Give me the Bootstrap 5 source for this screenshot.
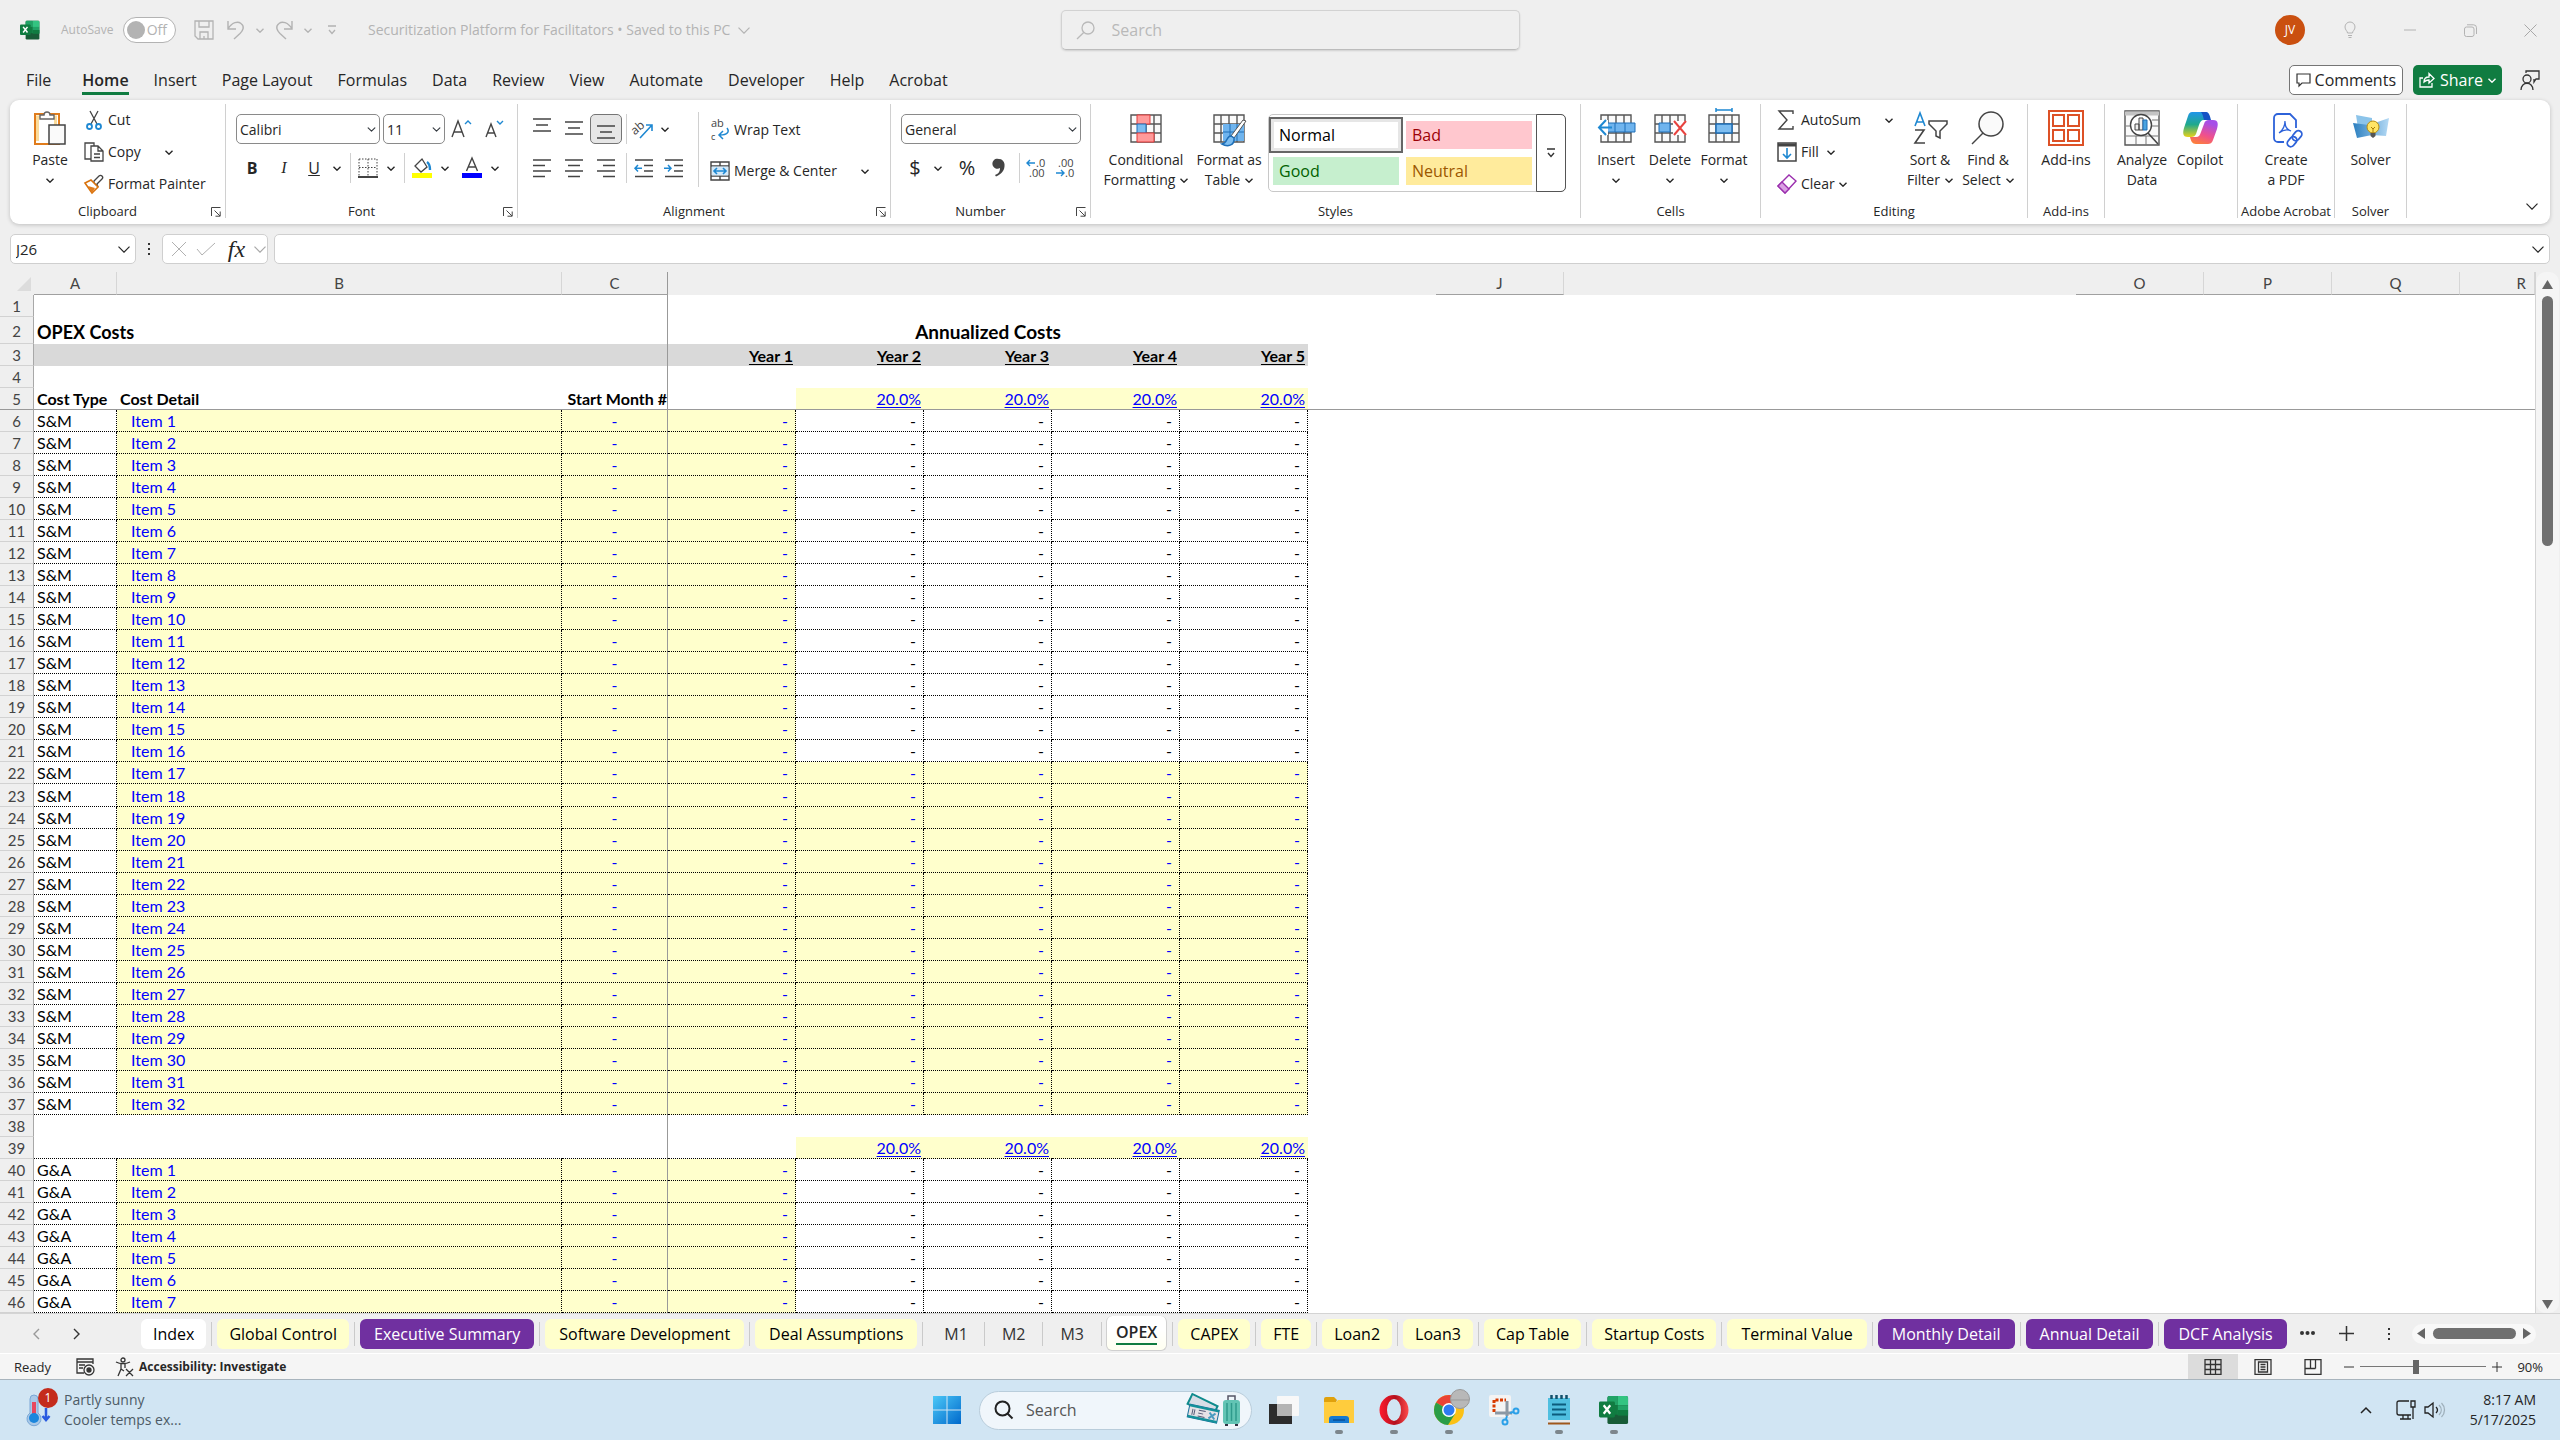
<!DOCTYPE html>
<html lang="en">
<head>
<meta charset="utf-8">
<meta name="viewport" content="width=device-width, initial-scale=1">
<title>Securitization Platform for Facilitators - Excel</title>
<link href="https://cdn.jsdelivr.net/npm/bootstrap@5.3.0/dist/css/bootstrap.min.css" rel="stylesheet">
<style>
:root{--ui:"Open Sans","Noto Sans",sans-serif;--cell:Lato,"Open Sans",sans-serif;--ink:#262626;--chrome:#efefef;--line:#d0d0d0}
body{font-family:var(--ui);font-size:14px;line-height:20px;color:var(--ink);background:var(--chrome);overflow:hidden}
button{background:none;border:0;padding:0;color:inherit;font:inherit}
a{color:inherit;text-decoration:none}
svg{display:block;flex:none;overflow:visible}
.s16{width:16px;height:16px}.s20{width:20px;height:20px}.s24{width:24px;height:24px}.s32{width:32px;height:32px}
.chev{width:8px;height:5px;fill:none;stroke:currentColor;stroke-width:1.4}
.chev-lg{width:12px;height:7px;fill:none;stroke:currentColor;stroke-width:1.2}
/* title bar */
.titlebar{height:60px;padding-left:20px;color:#b3b3b3}
.autosave{font-size:12px;margin-left:21px;width:62px}
.toggle{width:53px;height:26px;border:1px solid #b3b3b3;border-radius:13px;background:#fff;padding:0 8px 0 3px;font-size:14px}
.toggle i{width:18px;height:18px;border-radius:50%;background:#b3b3b3}
.quick button{width:32px;height:32px}
.quick .narrow{width:16px}
.searchbox{width:459px;height:40px;border:1px solid #d2d2d2;border-bottom-color:#bcbcbc;border-radius:5px;box-shadow:0 1px 2px #0002;padding:0 14px}
.searchbox input,.tasksearch input,.formula input,.namebox input{border:0;background:none;outline:0;min-width:0;font-size:16px;flex:1;padding:0;color:inherit}
.searchbox input::placeholder{color:#b9b9b9;opacity:1}
.side{flex:1 1 0;min-width:0}
.winbtn{width:60px;height:40px}
.avatar{width:30px;height:30px;border-radius:50%;background:#ca5010;color:#fff;font-size:12px}
/* ribbon tabs */
.tabs{height:40px;padding:0 20px 0 26px;font-size:16px}
.tabs nav{gap:25px}
.tabs nav a{height:35px;line-height:41px}
.tabs nav a:first-child{margin-right:6px}
.tabs nav .on{font-weight:600;border-bottom:3px solid #107c41}
.tabs .pill{height:30px;border-radius:5px;padding:0 6px;gap:4px;margin-right:10px}
.tabs .comments{border:1px solid #757575;background:#fff}
.tabs .share{background:#107c41;color:#fff;gap:5px}
/* ribbon */
.ribbon{margin:0 10px;height:124px;background:#fff;border-radius:9px;box-shadow:0 1px 4px #0003;padding:4px 0 6px}
.grp{border-right:1px solid var(--line);display:flex;flex-direction:column;justify-content:space-between;position:relative}
.grp .body{display:flex;height:100px}
.grp .title{font-size:13px;line-height:14px;text-align:center;white-space:nowrap}
.grp .with-launch{padding-right:20px}
.launch{position:absolute;right:4px;bottom:1px;width:10px;height:10px}
.g-clip{width:216px}.g-font{width:292px}.g-align{width:373px}.g-num{width:200px}.g-sty{width:490px}.g-cell{width:180px}
.g-edit{width:267px}.g-add{width:77px}.g-ana{width:133px}.g-acro{width:97px}.g-solv{width:72px}
.g-clip .body{padding-left:6px}.g-sty .body{padding-left:5px}
.row32{height:32px;display:flex;align-items:center;white-space:nowrap}
.row32 .s20,.row32 .s24{margin-right:4px}
.two{padding:10px 0 0 10px;display:flex;flex-direction:column;gap:9px}
.line30{height:30px;display:flex;align-items:center}
.line30 button,.slot{display:flex;align-items:center;justify-content:center;height:30px}
.w16{width:16px}.w18{width:18px}.w26{width:26px}.w28{width:28px}.w32{width:32px}
.sep{width:8px;height:30px;flex:none;display:flex;justify-content:center}
.sep::before{content:"";width:1px;background:var(--line)}
.combo{height:30px;border:1px solid #8a8a8a;border-radius:5px;font-size:14px;padding:0 18px 0 3px;background-size:9px 9px;background-position:right 3px center;color:#262626}
.press{background:#e6e6e6;border:1px solid #757575!important;border-radius:5px}
.big{display:flex;flex-direction:column;align-items:center;padding-top:8px;white-space:nowrap;line-height:20px}
.big .s32{margin-bottom:6px}
.big span{display:flex;align-items:center;gap:5px;height:20px}
.w100p{width:100px}.w68{width:68px}.w66{width:66px}.w58{width:58px}.w54{width:54px}
.gallery{width:298px;height:78px;margin:10px 0 0 6px;border:1px solid #c8c8c8;border-radius:5px;font-size:16px;display:flex}
.swatches{display:grid;grid-template-columns:134px 126px;grid-template-rows:36px 28px;column-gap:3px;row-gap:4px;padding:2px 4px 2px 0;align-items:center}
.swatches button{text-align:left;padding-left:6px;height:28px}
.swatches .normal{height:36px;border:2px solid #666;box-shadow:inset 0 0 0 3px #e6e6e6;color:#000;padding-left:8px}
.bad{background:#ffc7ce;color:#9c0006}.good{background:#c6efce;color:#006100;margin-left:4px;width:126px}.neutral{background:#ffeb9c;color:#9c5700}
.more{width:30px;margin:-1px -1px -1px auto;border:1px solid #555!important;border-radius:0 5px 5px 0;display:flex;align-items:center;justify-content:center}
/* formula bar */
.fbar{padding:10px 10px 8px;gap:6px}
.fbar>div{height:30px;background:#fff;border:1px solid #cfcfcf;border-radius:5px;display:flex;align-items:center}
.namebox{width:126px;padding:0 5px}
.namebox input{width:80px;font-size:15px;flex:1}
.fx{width:106px;justify-content:space-between;padding:0 1px 0 8px;color:#a8a8a8}
.fx em{font-family:"Liberation Serif",serif;font-size:24px;color:#262626;margin-left:3px}
.formula{flex:1;padding:0 5px 0 8px}
/* worksheet */
.sheet{min-height:0}
.sheetview{overflow:hidden;min-width:0;background:#fff;border-right:1px solid #d4d4d4}
.cells{font-family:var(--cell);font-size:16px;line-height:20px;table-layout:fixed;width:100%;border-collapse:separate;border-spacing:0;color:#000;background:#fff}
.cells th,.cells td{height:22px;padding:0 3px;white-space:nowrap;overflow:hidden;vertical-align:bottom}
.cells thead th{height:23px;background:var(--chrome);font-weight:400;color:#444;text-align:center;vertical-align:middle;line-height:18px;font-size:15px}
.cells thead .edge{border-bottom:1px solid #a0a0a0;border-right:1px solid #d6d6d6}
.cells tbody th{background:var(--chrome);border-right:1px solid #a8a8a8;border-bottom:1px solid #d2d2d2;font-weight:400;font-size:15px;color:#444;text-align:center;padding:0}
.cells .tall>*{height:27px;line-height:24px}
.cells .r23>*{height:23px}
.cells .pane{border-right:1px solid #999!important}
.cells .freeze>*{border-bottom:1px solid #999!important}
.cells .item td:nth-child(-n+9){border-bottom:1px dotted #000;border-right:1px dotted #000}
.cells .topline td:nth-child(-n+9){border-bottom:1px dotted #000}
.cells .y{background:#ffc}
.cells .blue{color:#00f}
.cells .detail{padding-left:14px}
.cells .dash{padding-right:7px}
.cells .grey{background:#d9d9d9}
.cells u{text-underline-offset:2px}
.cells .big-h{font-size:18px;font-weight:700}
.cells .mid-h{font-size:19px;font-weight:700;text-align:center}
.cells b{font-weight:700}
.vbar{width:23px;flex:none;background:#f5f5f5;border-radius:10px;margin-right:1px}
.vbar .thumb{width:11px;height:250px;border-radius:6px;background:#707070;margin-top:7px}
.tri{width:11px;height:9px;fill:#666}
/* sheet tabs */
.sheettabs{height:40px;border-top:1px solid #d4d4d4;font-size:16px;padding-left:25px}
.sheettabs .nav-b{width:40px}
.stab{height:30px;line-height:30px;border-radius:6px;padding:0 12px;white-space:nowrap;color:#000}
.stab.plain{padding:0 17px;color:#333}
.stabs{display:flex;align-items:center;padding-left:36px}
.stabs i{width:1px;height:24px;background:#cacaca;margin:0 5px}
.stabs i.tight{margin:0}
.stab.ye{background:#ffc}.stab.pu{background:#7030a0;color:#fff}.stab.wh{background:#fff}
.stab.pu,.stab.roomy{padding:0 14px}
.stab.cur{background:linear-gradient(#fff 40%,#fffff0);height:35px;line-height:32px;align-self:flex-start;font-weight:600;padding:0 9px;border:1px solid #d0d0d0;border-top:0;color:#262626;margin-left:4px}
.stab.cur u{text-decoration:none;border-bottom:2px solid #107c41;display:block;height:29px}
.dots-v{margin:0 20px 0 8px}
.hbar{width:124px;height:20px;background:#f8f8f8;border-radius:10px;margin-right:24px;padding:0 5px}
.hbar .thumb{width:83px;height:11px;border-radius:6px;background:#707070}
/* status bar */
.status{height:27px;background:#f5f5f5;border-top:1px solid #fff;border-bottom:1px solid #a8b4bd;font-size:13px;padding-left:14px}
.status button{height:25px}
.status .access{font-size:12px}
.view{width:50px}
.view.on{background:#dcdcdc}
.pct{margin:0 17px 0 13px}
.zoomr{-webkit-appearance:none;appearance:none;width:126px;height:14px;background:linear-gradient(#777,#777) center/100% 1px no-repeat;margin:0 4px}
.zoomr::-webkit-slider-thumb{-webkit-appearance:none;width:6px;height:14px;background:#666}
/* taskbar */
.taskbar{height:60px;background:#d1e5f3}
.weather{color:#4d5b66;padding-left:24px}
.badge1{position:absolute;left:14px;top:-6px;width:20px;height:20px;border-radius:50%;background:#c42b1c;color:#fff;font-size:12px;line-height:20px;text-align:center}
.tk{width:55px;height:60px;position:relative}
.tk .s32{width:30px;height:30px}
.tk.run::after{content:"";position:absolute;bottom:6px;width:8px;height:4px;border-radius:2px;background:#7d868c}
.tasksearch{width:273px;height:39px;border:1px solid #b9cddb;border-radius:20px;background:#f0f6fb;padding:0 10px 0 14px;margin:0 4px 0 5px}
.tasksearch input::placeholder{color:#555;opacity:1}
.clock{width:92px;text-align:right;padding-right:24px}
</style>
</head>
<body class="vh-100 d-flex flex-column">
<svg width="0" height="0" class="position-absolute" aria-hidden="true">
<defs>
<symbol id="cv" viewBox="0 0 8 5"><path d="M.5.7 4 4.2 7.5.7"/></symbol>
<symbol id="cvl" viewBox="0 0 12 7"><path d="M.5.7 6 6.2 11.500.7"/></symbol>
<symbol id="xl" viewBox="0 0 32 32"><rect x="9" y="1" width="22" height="30" rx="2" fill="#185c37"/><path d="M9 3a2 2 0 0 1 2-2h9v10H9z" fill="#21a366"/><path d="M20 1h9a2 2 0 0 1 2 2v8H20z" fill="#33c481"/><path d="M9 11h11v10H9z" fill="#107c41"/><path d="M20 11h11v10H20z" fill="#21a366" /><path d="M20 16h11v6H20z" fill="#107c41"/><rect x="0" y="7" width="17" height="17" rx="1.500" fill="#107c41"/><path d="M5 11l7 9M12 11l-7 9" stroke="#fff" stroke-width="2.400" fill="none"/></symbol>
<symbol id="launch" viewBox="0 0 10 10"><path d="M.5 9V.5H9.500M3.500 3.500l5.500 5.500M9.200 4.500v4.700H4.500" fill="none" stroke="#444"/></symbol>
<symbol id="gridr" viewBox="0 0 32 32"><path d="M1 1h30v27H1zM1 10h30M1 19h30M8 1v27M16 1v27M24 1v27" fill="#fafafa" stroke="#555" stroke-width="1.400"/></symbol>
<symbol id="al-t" viewBox="0 0 20 20"><path d="M1 3h18M4 9h12M1 15h18" stroke="#444" stroke-width="1.500"/></symbol>
<symbol id="al-l" viewBox="0 0 20 20"><path d="M1 2h18M1 7.500h12M1 13h18M1 18.500h12" stroke="#444" stroke-width="1.500"/></symbol>
<symbol id="al-c" viewBox="0 0 20 20"><path d="M1 2h18M4 7.500h12M1 13h18M4 18.500h12" stroke="#444" stroke-width="1.500"/></symbol>
<symbol id="al-r" viewBox="0 0 20 20"><path d="M1 2h18M7 7.500h12M1 13h18M7 18.500h12" stroke="#444" stroke-width="1.500"/></symbol>
</defs>
</svg>

<header class="titlebar d-flex align-items-center flex-shrink-0">
  <div class="side d-flex align-items-center">
    <svg class="s20"><use href="#xl"/></svg>
    <label class="autosave" for="autosave">AutoSave</label>
    <button id="autosave" class="toggle d-flex align-items-center justify-content-between"><i></i>Off</button>
    <div class="quick d-flex align-items-center ms-2 ps-1">
      <button class="d-flex align-items-center justify-content-center" aria-label="Save"><svg class="s20" viewBox="0 0 20 20" fill="none" stroke="#b3b3b3" stroke-width="1.300"><path d="M1 1h18v18H4l-3-3zM5 1v6h10V1M6 19v-7h8v7M10 19v-3"/></svg></button>
      <button class="d-flex align-items-center justify-content-center" aria-label="Undo"><svg class="s20" viewBox="0 0 20 20" fill="none" stroke="#b3b3b3" stroke-width="1.400"><path d="M2 1v8h8M2 9C6 2 12 1 15 3.500c4 3 2 7-1 10L8 19"/></svg></button>
      <button class="narrow" aria-label="Undo list"><svg class="chev ms-1"><use href="#cv"/></svg></button>
      <button class="d-flex align-items-center justify-content-center" aria-label="Redo"><svg class="s20" viewBox="0 0 20 20" fill="none" stroke="#b3b3b3" stroke-width="1.400"><path d="M18 1v8h-8M18 9C14 2 8 1 5 3.500c-4 3-2 7 1 10L12 19"/></svg></button>
      <button class="narrow" aria-label="Redo list"><svg class="chev ms-1"><use href="#cv"/></svg></button>
      <button class="d-flex align-items-center justify-content-center" aria-label="Customize toolbar"><svg width="8" height="10" viewBox="0 0 8 10" fill="none" stroke="#b3b3b3" stroke-width="1.300"><path d="M0 1h8M1 5l3 3.500L7 5"/></svg></button>
    </div>
    <button class="d-flex align-items-center gap-2 ms-3 ps-1">Securitization Platform for Facilitators • Saved to this PC <svg class="chev-lg"><use href="#cvl"/></svg></button>
  </div>
  <div class="searchbox d-flex align-items-center gap-3">
    <svg class="s20" viewBox="0 0 20 20" fill="none" stroke="#b9b9b9" stroke-width="1.300"><circle cx="12" cy="8" r="6"/><path d="M7.700 12.500 1 19"/></svg>
    <input type="search" placeholder="Search" aria-label="Search">
  </div>
  <div class="side d-flex align-items-center justify-content-end">
    <button class="winbtn d-flex align-items-center justify-content-center" aria-label="Account"><span class="avatar d-flex align-items-center justify-content-center">JV</span></button>
    <button class="winbtn d-flex align-items-center justify-content-center" aria-label="Tips"><svg class="s16" viewBox="0 0 16 16" fill="none" stroke="#b3b3b3"><path d="M5.500 11C5.500 9 3 8 3 5a5 5 0 0 1 10 0c0 3-2.500 4-2.500 6zM6 13.500h4M6.500 15.500h3"/></svg></button>
    <button class="winbtn d-flex align-items-center justify-content-center" aria-label="Minimize"><svg width="12" height="2"><path d="M0 1h12" stroke="#b3b3b3"/></svg></button>
    <button class="winbtn d-flex align-items-center justify-content-center" aria-label="Restore"><svg width="13" height="13" viewBox="0 0 13 13" fill="none" stroke="#b3b3b3"><rect x=".5" y="3" width="9.500" height="9.500" rx="2"/><path d="M3 .8h6.500a3 3 0 0 1 3 3V10"/></svg></button>
    <button class="winbtn d-flex align-items-center justify-content-center" aria-label="Close"><svg width="13" height="13" viewBox="0 0 13 13" stroke="#a8a8a8"><path d="M.5.5l12 12M12.500.5l-12 12"/></svg></button>
  </div>
</header>

<div class="tabs d-flex align-items-center flex-shrink-0">
  <nav class="d-flex flex-grow-1 align-self-start">
    <a href="#">File</a><a href="#" class="on">Home</a><a href="#">Insert</a><a href="#">Page Layout</a><a href="#">Formulas</a><a href="#">Data</a><a href="#">Review</a><a href="#">View</a><a href="#">Automate</a><a href="#">Developer</a><a href="#">Help</a><a href="#">Acrobat</a>
  </nav>
  <button class="pill comments d-flex align-items-center"><svg width="15" height="14" viewBox="0 0 15 14" fill="none" stroke="#333" stroke-width="1.200"><path d="M1 1h13v9H6l-3 3v-3H1z"/></svg>Comments</button>
  <button class="pill share d-flex align-items-center"><svg class="s16" viewBox="0 0 16 16" fill="none" stroke="#fff" stroke-width="1.300"><path d="M4 6H1v9h12v-4M5 10c0-4 3-5 5-5V1.500l5 5-5 4.500V8c-3 0-4 1-5 2z"/></svg>Share <svg class="chev"><use href="#cv"/></svg></button>
  <button class="ms-2" aria-label="People"><svg class="s20" viewBox="0 0 20 20" fill="none" stroke="#333" stroke-width="1.300"><circle cx="7" cy="9" r="4"/><path d="M1 20c0-9 12-9 12 0M6 3V1h13v8h-3l-2 3V9"/></svg></button>
</div>

<section class="ribbon d-flex flex-shrink-0" aria-label="Ribbon">
  <div class="grp g-clip">
    <div class="body">
      <button class="big w68"><svg class="s32" viewBox="0 0 32 32"><rect x="1" y="2" width="24" height="30" fill="#fff" stroke="#e07c1c" stroke-width="2"/><path d="M3.500 29V5h18v8" fill="none" stroke="#fbdc9c" stroke-width="3"/><path d="M6 7V3h4c0-4 6-4 6 0h4v4z" fill="#fff" stroke="#666" stroke-width="1.400"/><rect x="15" y="13" width="16" height="19" fill="#fafafa" stroke="#444" stroke-width="1.500"/></svg><span>Paste</span><span><svg class="chev"><use href="#cv"/></svg></span></button>
      <div>
        <button class="row32"><svg class="s20" viewBox="0 0 20 20" fill="none" stroke-width="1.300"><path d="M6 1l7 13M14 1 7 14" stroke="#444"/><circle cx="5.500" cy="16.500" r="2.500" stroke="#1e88d2" stroke-width="1.800"/><circle cx="14.500" cy="16.500" r="2.500" stroke="#1e88d2" stroke-width="1.800"/></svg>Cut</button>
        <button class="row32"><svg class="s20" viewBox="0 0 20 20" fill="#fff" stroke="#444" stroke-width="1.300"><path d="M10 4V1H1v16h6"/><path d="M7 4h7l5 5v10H7zM14 4v5h5M10 12h6M10 15.500h6"/></svg>Copy <svg class="chev ms-4"><use href="#cv"/></svg></button>
        <button class="row32"><svg class="s20" viewBox="0 0 20 20"><path d="M10 7l5-5c2-2 5 1 3 3l-5 5 1 3-4-4z" fill="#fff" stroke="#444" stroke-width="1.300"/><path d="M1 9l6-3 7 7-6 6z" fill="#fff" stroke="#d9730d" stroke-width="1.600"/><path d="M4 12l7 2-3 5z" fill="#e07c1c"/></svg>Format Painter</button>
      </div>
    </div>
    <div class="title with-launch">Clipboard</div><svg class="launch"><use href="#launch"/></svg>
  </div>

  <div class="grp g-font">
    <div class="two">
      <div class="line30">
        <select class="form-select combo" style="width:144px" aria-label="Font"><option>Calibri</option></select>
        <select class="form-select combo" style="width:62px;margin-left:3px" aria-label="Font size"><option>11</option></select>
        <button class="w32" aria-label="Grow font"><svg class="s20" viewBox="0 0 20 20" fill="none"><path d="M1 18 7 2l6 16M3 13h8" stroke="#444" stroke-width="1.400"/><path d="M14 5l3-3 3 3" stroke="#1e88d2" stroke-width="1.400"/></svg></button>
        <button class="w32" aria-label="Shrink font"><svg class="s20" viewBox="0 0 20 20" fill="none"><path d="M3 18 8 5l5 13M5 14h6" stroke="#444" stroke-width="1.400"/><path d="M14 2l3 3 3-3" stroke="#1e88d2" stroke-width="1.400"/></svg></button>
      </div>
      <div class="line30">
        <button class="w32 fw-bold fs-6">B</button><button class="w32 fst-italic fs-6" style="font-family:'Liberation Serif',serif">I</button><button class="w28 text-decoration-underline fs-6">U</button>
        <button class="w18" aria-label="Underline list"><svg class="chev"><use href="#cv"/></svg></button><span class="sep"></span>
        <button class="w28" aria-label="Borders"><svg class="s20" viewBox="0 0 20 20" fill="none" stroke="#444"><path d="M1 1h18v17M1 1v17M10 1v17M1 9.500h18" stroke-dasharray="1.500 1.500"/><path d="M0 19h20" stroke-width="2"/></svg></button><button class="w18" aria-label="Borders list"><svg class="chev"><use href="#cv"/></svg></button><span class="sep"></span>
        <button class="w28" aria-label="Fill colour"><svg class="s20" viewBox="0 0 20 20"><path d="M3 8l7-7 5 8-6 5z" fill="#fff" stroke="#444" stroke-width="1.300"/><path d="M15 4c3 2 3 5 3 8" stroke="#1e88d2" stroke-width="2.400" fill="none"/><path d="M0 15h20v5H0z" fill="#ff0"/></svg></button><button class="w18" aria-label="Fill list"><svg class="chev"><use href="#cv"/></svg></button>
        <button class="w28 ms-1" aria-label="Font colour"><svg class="s20" viewBox="0 0 20 20"><path d="M4.500 13 10 0l5.500 13M6.500 9h7" fill="none" stroke="#444" stroke-width="1.400"/><path d="M0 15h20v5H0z" fill="#00f"/></svg></button><button class="w18" aria-label="Font colour list"><svg class="chev"><use href="#cv"/></svg></button>
      </div>
    </div>
    <div class="title with-launch">Font</div><svg class="launch"><use href="#launch"/></svg>
  </div>

  <div class="grp g-align">
    <div class="body">
      <div class="two ps-2">
        <div class="line30">
          <button class="w32" aria-label="Top"><svg class="s20"><use href="#al-t" y="-3"/></svg></button><button class="w32" aria-label="Middle"><svg class="s20"><use href="#al-t"/></svg></button><button class="w32 press" aria-label="Bottom"><svg class="s20"><use href="#al-t" y="4"/></svg></button><span class="sep"></span>
          <button class="w26" aria-label="Orientation"><svg class="s20" viewBox="0 0 20 20"><text x="-1" y="13" font-size="12" fill="#444" transform="rotate(-40 5 11)">ab</text><path d="M7 19 19 6M13 6h6v6" fill="none" stroke="#1e88d2" stroke-width="1.600"/></svg></button><button class="w18" aria-label="Orientation list"><svg class="chev"><use href="#cv"/></svg></button>
        </div>
        <div class="line30">
          <button class="w32" aria-label="Left"><svg class="s20"><use href="#al-l"/></svg></button><button class="w32" aria-label="Center"><svg class="s20"><use href="#al-c"/></svg></button><button class="w32" aria-label="Right"><svg class="s20"><use href="#al-r"/></svg></button><span class="sep"></span>
          <button class="w28" aria-label="Decrease indent"><svg class="s20" viewBox="0 0 20 20" fill="none"><path d="M1 2h18M10 7.500h9M10 13h9M1 18.500h18" stroke="#444" stroke-width="1.500"/><path d="M8 10.200H1M4 7l-3 3.200 3 3.200" stroke="#1e88d2" stroke-width="1.500"/></svg></button>
          <button class="w32" aria-label="Increase indent"><svg class="s20" viewBox="0 0 20 20" fill="none"><path d="M1 2h18M10 7.500h9M10 13h9M1 18.500h18" stroke="#444" stroke-width="1.500"/><path d="M0 10.200h7M4 7l3 3.200-3 3.200" stroke="#1e88d2" stroke-width="1.500"/></svg></button>
        </div>
      </div>
      <span class="sep h-75 mt-2 ms-1"></span>
      <div class="two ps-2">
        <button class="row32"><svg class="s20" viewBox="0 0 20 20"><text x="1" y="7" font-size="11" fill="#444">ab</text><text x="1" y="20" font-size="9" fill="#444">c</text><path d="M17 8c3 4 0 7-7 7M13 11l-4 4 4 4" fill="none" stroke="#1e88d2" stroke-width="1.500"/></svg>Wrap Text</button>
        <button class="row32"><svg class="s20" viewBox="0 0 20 20"><path d="M1 1h18v18H1zM1 5h18M1 15h18M10 1v4M10 15v4" fill="#fff" stroke="#444" stroke-width="1.400"/><path d="M1.700 5.500h16.600v9H1.700z" fill="#d3e9f9"/><path d="M4 10h12M7 7l-3 3 3 3M13 7l3 3-3 3" fill="none" stroke="#1e88d2" stroke-width="1.600"/></svg>Merge &amp; Center <svg class="chev ms-4"><use href="#cv"/></svg></button>
      </div>
    </div>
    <div class="title with-launch">Alignment</div><svg class="launch"><use href="#launch"/></svg>
  </div>

  <div class="grp g-num">
    <div class="two">
      <div class="line30"><select class="form-select combo" style="width:180px" aria-label="Number format"><option>General</option></select></div>
      <div class="line30">
        <button class="w28 fs-5">$</button><button class="w18" aria-label="Currency list"><svg class="chev"><use href="#cv"/></svg></button>
        <button class="w32 fs-5 ms-1">%</button><button class="w32" aria-label="Comma style"><svg width="12" height="18" viewBox="0 0 12 18"><path d="M6 0a5 5 0 1 0 1 9c0 4-2 6-5 7l1 1.500C9 15 12 11 11.500 5 11 2 9 0 6 0z" fill="#444"/></svg></button><span class="sep"></span>
        <button class="w26" aria-label="Increase decimal"><svg class="s20" viewBox="0 0 20 20"><path d="M9 5H1M4 2 1 5l3 3" fill="none" stroke="#1e88d2" stroke-width="1.400"/><text x="10" y="9" font-size="11" fill="#444">.0</text><text x="3" y="19" font-size="11" fill="#444">.00</text></svg></button>
        <button class="w32" aria-label="Decrease decimal"><svg class="s20" viewBox="0 0 20 20"><path d="M1 15h8M6 12l3 3-3 3" fill="none" stroke="#1e88d2" stroke-width="1.400"/><text x="3" y="9" font-size="11" fill="#444">.00</text><text x="10" y="19" font-size="11" fill="#444">.0</text></svg></button>
      </div>
    </div>
    <div class="title with-launch">Number</div><svg class="launch"><use href="#launch"/></svg>
  </div>

  <div class="grp g-sty">
    <div class="body">
      <button class="big w100p"><svg class="s32" viewBox="0 0 32 32"><use href="#gridr" y="2" width="32" height="32"/><path d="M7 3h13v9H7z" fill="#ff9a9a" stroke="#e23b3b"/><path d="M7 12h9v9H7z" fill="#7dbdf0" stroke="#1e6fb8"/><path d="M7 21h17v9H7z" fill="#ff9a9a" stroke="#e23b3b"/></svg><span>Conditional</span><span>Formatting <svg class="chev"><use href="#cv"/></svg></span></button>
      <button class="big w66"><svg class="s32" viewBox="0 0 32 32"><use href="#gridr" y="2" width="32" height="32"/><path d="M10 12h21v17H10z" fill="#6fb4ee"/><path d="M10 20h21M17 12v17M24 12v17" stroke="#1e6fb8"/><path d="M33 9 21 26l-3-2L30 8z" fill="#fff" stroke="#555"/><path d="M18 24c-5 0-3 7-9 8 5 3 13 2 12-6z" fill="#7dbdf0" stroke="#1e6fb8" stroke-width="1.500"/></svg><span>Format as</span><span>Table <svg class="chev"><use href="#cv"/></svg></span></button>
      <div class="gallery">
        <div class="swatches"><button class="normal">Normal</button><button class="bad">Bad</button><button class="good">Good</button><button class="neutral">Neutral</button></div>
        <button class="more" aria-label="More styles"><svg width="8" height="10" viewBox="0 0 8 10" fill="none" stroke="#333" stroke-width="1.400"><path d="M0 1h8M1 5l3 3.500L7 5"/></svg></button>
      </div>
    </div>
    <div class="title">Styles</div>
  </div>

  <div class="grp g-cell">
    <div class="body ps-2">
      <button class="big w54"><svg class="s32" viewBox="0 0 32 32"><use href="#gridr" y="2" width="32" height="32"/><path d="M6 11h29v9H6z" fill="#6fb4ee" stroke="#1e6fb8"/><path d="M15 11v9M25 11v9" stroke="#1e6fb8"/><path d="M-2 8h10v15H-2z" fill="#fff"/><path d="M12 15.500H-1M6 8l-7 7.500L6 23" fill="none" stroke="#1e88d2" stroke-width="2"/></svg><span>Insert</span><span><svg class="chev"><use href="#cv"/></svg></span></button>
      <button class="big w54"><svg class="s32" viewBox="0 0 32 32"><use href="#gridr" y="2" width="32" height="32"/><path d="M5 11h11v9H5z" fill="#6fb4ee" stroke="#1e6fb8"/><path d="M19 9h13v14H19z" fill="#fff"/><path d="M20 9l12 14M32 9 20 23" stroke="#e8433f" stroke-width="2"/></svg><span>Delete</span><span><svg class="chev"><use href="#cv"/></svg></span></button>
      <button class="big w54"><svg class="s32" viewBox="0 0 32 32"><use href="#gridr" y="2" width="32" height="32"/><path d="M8 12h16v9H8z" fill="#7dbdf0" stroke="#1e6fb8" stroke-width="1.500"/><path d="M8-2h16M8-4v4M24-4v4" stroke="#1e88d2" stroke-width="1.500"/></svg><span>Format</span><span><svg class="chev"><use href="#cv"/></svg></span></button>
    </div>
    <div class="title">Cells</div>
  </div>

  <div class="grp g-edit">
    <div class="body ps-3">
      <div style="width:124px">
        <button class="row32"><svg class="s20" viewBox="0 0 20 20" fill="none" stroke="#444" stroke-width="1.400"><path d="M16 4V1H2l8 9-8 9h14v-3"/></svg>AutoSum <svg class="chev ms-4"><use href="#cv"/></svg></button>
        <button class="row32"><svg class="s20" viewBox="0 0 20 20"><path d="M1 1h18v18H1z" fill="#fff" stroke="#444" stroke-width="1.500"/><path d="M1 3h18" stroke="#444" stroke-width="3"/><path d="M10 6v10M6 12l4 4 4-4" fill="none" stroke="#1e88d2" stroke-width="1.600"/></svg>Fill <svg class="chev ms-2"><use href="#cv"/></svg></button>
        <button class="row32"><svg class="s20" viewBox="0 0 20 20" stroke="#9b2fae" stroke-width="1.400"><path d="M1 12 12 1l7 6L8 19z" fill="#fff"/><path d="M1 12l4-4 7 7-4 4z" fill="#d9a0e2"/></svg>Clear <svg class="chev ms-1"><use href="#cv"/></svg></button>
      </div>
      <button class="big w58"><svg class="s32" viewBox="0 0 32 32" fill="none"><path d="M1 14 6 1l5 13M2.500 10h7" stroke="#1e88d2" stroke-width="1.600"/><path d="M1 18h9L1 31h10" stroke="#444" stroke-width="1.600"/><path d="M15 9h18v3l-7 7v7l-4-2v-5l-7-7z" stroke="#444" stroke-width="1.500"/></svg><span>Sort &amp;</span><span>Filter <svg class="chev"><use href="#cv"/></svg></span></button>
      <button class="big w58"><svg class="s32" viewBox="0 0 32 32" fill="#fafafa" stroke="#444" stroke-width="1.500"><circle cx="19" cy="12" r="12"/><path d="M11 21 0 32"/></svg><span>Find &amp;</span><span>Select <svg class="chev"><use href="#cv"/></svg></span></button>
    </div>
    <div class="title">Editing</div>
  </div>

  <div class="grp g-add">
    <div class="body justify-content-center"><button class="big"><svg class="s32" viewBox="0 0 32 32" fill="#fff" stroke="#dd5126" stroke-width="2"><path d="M-1-1h34v34H-1z"/><path d="M3 3h11v11H3zM18 3h11v11H18zM3 18h11v11H3zM18 18h11v11H18z"/></svg><span>Add-ins</span></button></div>
    <div class="title">Add-ins</div>
  </div>
  <div class="grp g-ana">
    <div class="body ps-2">
      <button class="big w58"><svg class="s32" viewBox="0 0 32 32"><path d="M-1-1h34v34H-1z" fill="#fafafa" stroke="#555" stroke-width="1.400"/><path d="M-1 1.500h34" stroke="#c4c4c4" stroke-width="4"/><path d="M0 14h6M0 24h32M10 24v9M20 24v9M26 8h7M26 14h7" stroke="#777"/><circle cx="15" cy="13" r="10.500" fill="#fff" stroke="#444" stroke-width="1.400"/><path d="M9 18v-6h4v6zM13 18V6h4v12z" fill="#eee" stroke="#444"/><path d="M17 18V8h4v10z" fill="#4aa3e0" stroke="#1e6fb8"/><path d="M22 21l10 11" stroke="#444" stroke-width="1.600"/></svg><span>Analyze</span><span>Data</span></button>
      <button class="big w58"><svg class="s32" viewBox="0 0 32 32"><defs><linearGradient id="c1" x1="0" y1="0" x2="0" y2="1"><stop offset="0" stop-color="#2095ea"/><stop offset=".5" stop-color="#1fa98c"/><stop offset="1" stop-color="#e8d21a"/></linearGradient><linearGradient id="c2" x1="0" y1="1" x2=".4" y2="0"><stop offset="0" stop-color="#ff8a2a"/><stop offset=".5" stop-color="#f0508c"/><stop offset="1" stop-color="#a64fe8"/></linearGradient></defs><path d="M8 0h13c4 0 4 3 5 8h-6c-3 0-4 2-5 5l-3 9c-1 2-2 3-5 3H4c-6 0-5-5-4-9l4-12c1-3 2-4 4-4z" fill="url(#c1)"/><path d="M17 0h5c3 0 4 4 5 8h-7c-1-3-1-6-3-8z" fill="#1653c4"/><path d="M24 32H12c-4 0-5-3-6-7h6c3 0 4-2 5-5l3-8c1-3 2-4 5-4h4c6 0 5 5 4 9l-4 11c-1 3-3 4-5 4z" fill="url(#c2)"/></svg><span>Copilot</span></button>
    </div>
    <div class="title">&nbsp;</div>
  </div>
  <div class="grp g-acro">
    <div class="body justify-content-center"><button class="big"><svg class="s32" viewBox="0 0 32 32" fill="none" stroke="#2d62d9" stroke-width="1.800"><path d="M14 30H8a4 4 0 0 1-4-4V6a4 4 0 0 1 4-4h12l6 6v8"/><path d="M9 21c4-3 6-8 6-12M9 21c4-3 8-4 12-2-3-1-6-4-6-9" stroke-width="1.300"/><rect x="24" y="18" width="7" height="11" rx="3.500" transform="rotate(40 27 23)"/><rect x="19" y="24" width="7" height="11" rx="3.500" transform="rotate(40 22 29)"/></svg><span>Create</span><span>a PDF</span></button></div>
    <div class="title">Adobe Acrobat</div>
  </div>
  <div class="grp g-solv">
    <div class="body justify-content-center"><button class="big"><svg class="s32" viewBox="0 0 32 32"><defs><linearGradient id="sv"><stop offset="0" stop-color="#2b7fc0"/><stop offset="1" stop-color="#b5daf5"/></linearGradient></defs><path d="M1 3l16 3v10H3z" fill="#8cc4ea"/><path d="M-2 11l16 2 20-7-3 18-14-1-15 3z" fill="url(#sv)"/><circle cx="18" cy="15" r="6" fill="#ffe566" stroke="#b88d10"/><path d="M16 15l2 2 2-2M18 17v4" stroke="#a87b00" fill="none"/><path d="M15.500 21h5v3l-2.500 2-2.500-2z" fill="#555"/></svg><span>Solver</span></button></div>
    <div class="title">Solver</div>
  </div>
  <button class="ms-auto align-self-end me-2 pe-1 pb-2" aria-label="Collapse ribbon"><svg class="chev-lg"><use href="#cvl"/></svg></button>
</section>

<div class="fbar d-flex align-items-center flex-shrink-0">
  <div class="namebox"><input value="J26" aria-label="Name box"><svg class="chev-lg"><use href="#cvl"/></svg></div>
  <svg class="mx-1" width="6" height="16" viewBox="0 0 6 16" fill="#333"><path d="M2 2h2v2H2zM2 7h2v2H2zM2 12h2v2H2z"/></svg>
  <div class="fx"><svg class="s16" viewBox="0 0 16 16" stroke="#b0b0b0"><path d="M1 1l14 14M15 1 1 15"/></svg><svg width="20" height="14" viewBox="0 0 20 14" fill="none" stroke="#b0b0b0"><path d="M1 7l5 6L19 1"/></svg><em>fx</em><svg class="chev-lg"><use href="#cvl"/></svg></div>
  <div class="formula"><input aria-label="Formula"><svg class="chev-lg"><use href="#cvl"/></svg></div>
</div>

<main class="sheet d-flex flex-grow-1">
  <div class="sheetview flex-grow-1">
    <table class="cells">
      <colgroup><col style="width:34px"><col style="width:83px"><col style="width:445px"><col style="width:106px"><col style="width:128px"><col style="width:128px"><col style="width:128px"><col style="width:128px"><col style="width:128px"><col style="width:128px"><col style="width:128px"><col><col style="width:128px"><col style="width:128px"><col style="width:128px"><col style="width:75px"></colgroup>
      <thead><tr><th><svg class="ms-auto" width="14" height="14"><path d="M14 0v14H0z" fill="#dcdcdc"/></svg></th><th class="edge">A</th><th class="edge">B</th><th class="edge pane">C</th><th></th><th></th><th></th><th></th><th></th><th></th><th class="edge">J</th><th></th><th class="edge">O</th><th class="edge">P</th><th class="edge">Q</th><th class="edge text-end pe-2">R</th></tr></thead>
      <tbody id="rows"></tbody>
    </table>
  </div>
  <div class="vbar d-flex flex-column align-items-center">
    <svg class="tri mt-2" viewBox="0 0 11 9"><path d="M5.500 0 11 9H0z"/></svg><div class="thumb"></div>
    <svg class="tri mt-auto mb-1" viewBox="0 0 11 9"><path d="M5.500 9 0 0h11z"/></svg>
  </div>
</main>

<nav class="sheettabs d-flex align-items-center flex-shrink-0" aria-label="Sheets">
  <button class="nav-b" aria-label="Previous"><svg width="7" height="12" viewBox="0 0 7 12" class="ms-2" fill="none" stroke="#999" stroke-width="1.400"><path d="M6 1 1 6l5 5"/></svg></button>
  <button class="nav-b" aria-label="Next"><svg width="7" height="12" viewBox="0 0 7 12" class="ms-2" fill="none" stroke="#333" stroke-width="1.400"><path d="M1 1l5 5-5 5"/></svg></button>
  <div class="stabs">
    <a href="#" class="stab wh">Index</a><i></i><a href="#" class="stab ye">Global Control</a><i></i><a href="#" class="stab pu">Executive Summary</a><i></i><a href="#" class="stab ye roomy">Software Development</a><i></i><a href="#" class="stab ye roomy">Deal Assumptions</a><i></i><a href="#" class="stab plain px-3">M1</a><i class="tight"></i><a href="#" class="stab plain">M2</a><i class="tight"></i><a href="#" class="stab plain">M3</a><i class="tight"></i><a href="#" class="stab cur"><u>OPEX</u></a><i></i><a href="#" class="stab ye">CAPEX</a><i></i><a href="#" class="stab ye">FTE</a><i></i><a href="#" class="stab ye">Loan2</a><i></i><a href="#" class="stab ye">Loan3</a><i></i><a href="#" class="stab ye">Cap Table</a><i></i><a href="#" class="stab ye">Startup Costs</a><i></i><a href="#" class="stab ye roomy">Terminal Value</a><i></i><a href="#" class="stab pu">Monthly Detail</a><i></i><a href="#" class="stab pu">Annual Detail</a><i></i><a href="#" class="stab pu">DCF Analysis</a>
  </div>
  <div class="ms-auto d-flex align-items-center">
    <button class="me-4" aria-label="More sheets"><svg width="15" height="5" fill="#333"><circle cx="2" cy="2" r="2"/><circle cx="7.500" cy="2" r="2"/><circle cx="13" cy="2" r="2"/></svg></button>
    <button class="me-4" aria-label="New sheet"><svg width="15" height="15"><path d="M7.500 0v15M0 7.500h15" stroke="#333" stroke-width="1.500"/></svg></button>
    <svg class="dots-v" width="6" height="16" viewBox="0 0 6 16" fill="#333"><path d="M2 2h2v2H2zM2 7h2v2H2zM2 12h2v2H2z"/></svg>
    <div class="hbar d-flex align-items-center justify-content-between"><svg width="8" height="11"><path d="M8 0v11L0 5.500z" fill="#666"/></svg><div class="thumb"></div><svg width="8" height="11"><path d="M0 0v11l8-5.500z" fill="#666"/></svg></div>
  </div>
</nav>

<footer class="status d-flex align-items-center flex-shrink-0">
  <span>Ready</span>
  <button class="ms-4" aria-label="Macro"><svg class="s20" viewBox="0 0 20 20" fill="none" stroke="#333" stroke-width="1.300"><path d="M9 16H2V2h16v5M2 5h16M4 8h6M4 11h4"/><circle cx="14" cy="13" r="5"/><circle cx="14" cy="13" r="2" fill="#333"/></svg></button>
  <button class="access ms-3 ps-1 d-flex align-items-center fw-bold"><svg class="s20 me-1" viewBox="0 0 20 20" fill="none" stroke="#333" stroke-width="1.300"><circle cx="8" cy="3" r="2"/><path d="M1 5c4 2 10 2 14 0M6 7v5l-3 7M10 7v4M11 12l7 7M18 12l-7 7M6 12l3 2"/></svg>Accessibility: Investigate</button>
  <div class="ms-auto d-flex align-items-center">
    <button class="view on d-flex align-items-center justify-content-center" aria-label="Normal view"><svg class="s16" viewBox="0 0 16 16" fill="none" stroke="#333" stroke-width="1.300"><path d="M0 .7h16v14.600H0zM0 5.500h16M0 10.500h16M5.500 0v15M10.500 0v15"/></svg></button>
    <button class="view d-flex align-items-center justify-content-center" aria-label="Page layout"><svg class="s16" viewBox="0 0 16 16" fill="none" stroke="#333" stroke-width="1.300"><path d="M0 .7h16v14.600H0zM3.500 3h9v10h-9zM5.500 5.500h5M5.500 8h5M5.500 10.500h5"/></svg></button>
    <button class="view d-flex align-items-center justify-content-center" aria-label="Page break"><svg class="s16" viewBox="0 0 16 16" fill="none" stroke="#333" stroke-width="1.300"><path d="M0 .7h16v14.600H0zM0 9.500h10.500M5.500 0v9M10.500 0v9.500"/></svg></button>
    <button class="ms-1" aria-label="Zoom out"><svg width="14" height="14"><path d="M2 7h10" stroke="#333"/></svg></button>
    <input class="zoomr" type="range" min="0" max="100" value="44" aria-label="Zoom">
    <button aria-label="Zoom in"><svg width="14" height="14"><path d="M2 7h10M7 2v10" stroke="#333"/></svg></button>
    <button class="pct">90%</button>
  </div>
</footer>

<div class="taskbar d-flex align-items-center flex-shrink-0">
  <div class="side">
    <button class="weather d-flex align-items-center gap-2 text-start">
      <span class="position-relative"><svg class="s32" viewBox="0 0 32 32"><path d="M6 5a4 4 0 0 1 8 0v14a7 7 0 1 1-8 0z" fill="#a9c9e8" stroke="#7aa7d6"/><path d="M10 8v12" stroke="#e8485e" stroke-width="4"/><circle cx="10" cy="24" r="5" fill="#1b86dc"/><path d="M22 14v12M18.500 22l3.500 4 3.500-4" stroke="#2a5be0" stroke-width="2.500" fill="none"/></svg><span class="badge1">1</span></span>
      <span>Partly sunny<br>Cooler temps ex...</span>
    </button>
  </div>
  <div class="d-flex align-items-center">
    <button class="tk d-flex align-items-center justify-content-center" aria-label="Start"><svg class="s32" viewBox="0 0 30 30"><defs><linearGradient id="w" x1="0" y1="0" x2="1" y2="1"><stop offset="0" stop-color="#4cc8f7"/><stop offset="1" stop-color="#0069cc"/></linearGradient></defs><path d="M1 1h13.500v13.500H1zM15.500 1H29v13.500H15.500zM1 15.500h13.500V29H1zM15.500 15.500H29V29H15.500z" fill="url(#w)"/></svg></button>
    <div class="tasksearch d-flex align-items-center gap-2">
      <svg class="s20 me-1" viewBox="0 0 20 20" fill="none" stroke="#222" stroke-width="2"><circle cx="8.500" cy="8.500" r="7"/><path d="M13.500 13.500 18.500 18.500"/></svg>
      <input type="search" placeholder="Search" aria-label="Search Windows">
      <svg width="54" height="32" viewBox="0 0 54 32"><g transform="rotate(12 16 16)"><path d="M2 3h28v11H2z" fill="#d8dde6" stroke="#0f8b8d" stroke-width="2" transform="rotate(14 4 4)"/><path d="M2 13h30v13H2z" fill="#e6e2e6" stroke="#1b6f9a"/><path d="M2 14h30M2 25h30" stroke="#14909a" stroke-width="2.500"/><path d="M6 17v6M8 17v6M12 17h7M12 20h5M12 23h7" stroke="#555a78"/><path d="M23 17l6 6M29 17l-6 6" stroke="#4a9bc0" stroke-width="2"/></g><path d="M41 7V2h7v5" fill="none" stroke="#556" stroke-width="1.500"/><rect x="36" y="6" width="17" height="24" rx="3" fill="#62c4b4"/><path d="M40 9v18M44.500 9v18M49 9v18" stroke="#2f9a8c" stroke-width="1.500"/><path d="M38 31h3M48 31h3" stroke="#334" stroke-width="2"/></svg>
    </div>
    <button class="tk d-flex align-items-center justify-content-center" aria-label="Task view"><svg class="s32" viewBox="0 0 30 30"><path d="M0 9h23v20H0z" fill="#2c2c2c"/><rect x="8" y="1" width="22" height="20" rx="1" fill="#f8f8f8"/><path d="M8 9h15v12H8z" fill="#b4b4b4"/></svg></button>
    <button class="tk run d-flex align-items-center justify-content-center" aria-label="File Explorer"><svg class="s32" viewBox="0 0 30 30"><path d="M0 4q0-2 2-2h8l3 3-2 4H0z" fill="#e0a10c"/><path d="M0 7h12l2-2h16v23H0z" fill="#ffcc3d"/><path d="M5 28v-4q0-3 3-3h14q3 0 3 3v4z" fill="#1579d0"/><path d="M9 25h12" stroke="#0a4f96" stroke-width="1.500"/></svg></button>
    <button class="tk run d-flex align-items-center justify-content-center" aria-label="Opera"><svg class="s32" viewBox="0 0 30 30"><defs><linearGradient id="op"><stop offset="0" stop-color="#ff1b2d"/><stop offset=".55" stop-color="#b3101d"/><stop offset="1" stop-color="#ff4b4b"/></linearGradient></defs><path fill-rule="evenodd" d="M15 0a14.500 15 0 1 0 0 30a14.500 15 0 1 0 0-30zM15 4a7 11 0 1 1 0 22a7 11 0 1 1 0-22z" fill="url(#op)"/></svg></button>
    <button class="tk run d-flex align-items-center justify-content-center" aria-label="Chrome"><svg class="s32" viewBox="0 0 30 30"><circle cx="15" cy="15" r="15" fill="#fbc116"/><path d="M15 15 2 7.500A15 15 0 0 1 28 7.500z" fill="#ea4335"/><path d="M2 7.500A15 15 0 0 0 14 30l7-11-6-4z" fill="#2a9d48"/><circle cx="15" cy="15" r="7" fill="#fff"/><circle cx="15" cy="15" r="5.500" fill="#2f7bf2"/><circle cx="26" cy="4" r="9.500" fill="#b8b8b8" stroke="#999"/><path d="M17 5h18" stroke="#999"/></svg></button>
    <button class="tk d-flex align-items-center justify-content-center" aria-label="Snipping Tool"><svg class="s32" viewBox="0 0 30 30"><rect width="22" height="22" rx="2" fill="#f4f4f4"/><path d="M5 17V5h12" fill="none" stroke="#d83b01" stroke-width="3" stroke-dasharray="3 1.500"/><path d="M18 6v15M6 18h17" stroke="#8c98a4" stroke-width="3"/><circle cx="27" cy="16" r="2.500" fill="none" stroke="#2ba0e8" stroke-width="2"/><circle cx="16" cy="27" r="2.500" fill="none" stroke="#2ba0e8" stroke-width="2"/><path d="M24 17l-3 1M17 24l1-3" stroke="#2ba0e8" stroke-width="2"/></svg></button>
    <button class="tk run d-flex align-items-center justify-content-center" aria-label="Notepad"><svg class="s32" viewBox="0 0 30 30"><path d="M4 3h22v22H4z" fill="#4fbfe0"/><path d="M4 25h22v2H4z" fill="#e8e8e8"/><path d="M4 28.500h22" stroke="#a0571a" stroke-width="2"/><path d="M8 9.500h14M8 14.500h14M8 19.500h14" stroke="#0c5c7d" stroke-width="2"/><path d="M7.500 0v4M12.500 0v4M17.500 0v4M22.500 0v4" stroke="#12506b" stroke-width="2.500"/></svg></button>
    <button class="tk run d-flex align-items-center justify-content-center" aria-label="Excel"><svg class="s32"><use href="#xl"/></svg></button>
  </div>
  <div class="side d-flex align-items-center justify-content-end">
    <button class="me-3" aria-label="Tray"><svg width="12" height="8" viewBox="0 0 12 8" fill="none" stroke="#222" stroke-width="1.500"><path d="M1 7l5-5 5 5"/></svg></button>
    <button class="ms-2 me-4 d-flex align-items-center gap-2" aria-label="Network and sound"><svg class="s20" viewBox="0 0 20 20" fill="none" stroke="#222" stroke-width="1.300"><path d="M13 1H3q-2 0-2 2v10q0 2 2 2h12M7 15v4M12 15v4M4 19h11M15 1h4v6h-4zM17 7v12"/></svg><svg class="s20" viewBox="0 0 20 20" fill="none" stroke="#222" stroke-width="1.300"><path d="M1 7h3l5-4v14l-5-4H1zM12 7c2 2 2 4 0 6"/><path d="M15 5c3 3 3 7 0 10M17.500 3c4 4 4 10 0 14" stroke="#9fb0bb"/></svg></button>
    <div class="clock">8:17 AM<br>5/17/2025</div>
  </div>
</div>

<script>
const body = document.getElementById('rows');
const pct = c => `<td class="y blue text-end"><u>${c}</u></td>`;
const blanks = '<td></td>'.repeat(7);
function add(n, cells, cls) {
  body.insertAdjacentHTML('beforeend', `<tr class="${cls || ''}"><th scope="row">${n}</th>${cells}${blanks}</tr>`);
}
const plain = (a, b, c, rest) => `<td>${a}</td><td>${b}</td><td class="pane">${c}</td>${rest}`;
const empty5 = '<td></td>'.repeat(5);
const rates = '<td></td>' + pct('20.0%').repeat(4);
add(1, plain('', '', '', empty5));
add(2, '<td class="big-h" colspan="2">OPEX Costs</td><td class="pane"></td><td class="mid-h" colspan="5">Annualized Costs</td>', 'tall');
add(3, '<td class="grey"></td><td class="grey"></td><td class="grey pane"></td>' + [1, 2, 3, 4, 5].map(y => `<td class="grey text-end"><b><u>Year ${y}</u></b></td>`).join(''));
add(4, plain('', '', '', empty5));
add(5, '<td><b>Cost Type</b></td><td><b>Cost Detail</b></td><td class="pane text-end px-0"><b>Start Month #</b></td>' + rates, 'freeze');
function item(row, type, i, yellow) {
  const c = yellow ? 'y blue' : '';
  add(row, `<td>${type}</td><td class="y blue detail">Item ${i}</td><td class="y blue text-center pane">-</td><td class="y blue text-end dash">-</td>` + `<td class="${c} text-end dash">-</td>`.repeat(4), 'item' + (row === 23 ? ' r23' : ''));
}
for (let i = 1; i <= 32; i++) item(i + 5, 'S&amp;M', i, i >= 17);
add(38, plain('', '', '', empty5));
add(39, plain('', '', '', rates), 'topline');
for (let i = 1; i <= 7; i++) item(i + 39, 'G&amp;A', i, false);
</script>
<script src="https://cdn.jsdelivr.net/npm/bootstrap@5.3.0/dist/js/bootstrap.bundle.min.js"></script>
</body>
</html>
